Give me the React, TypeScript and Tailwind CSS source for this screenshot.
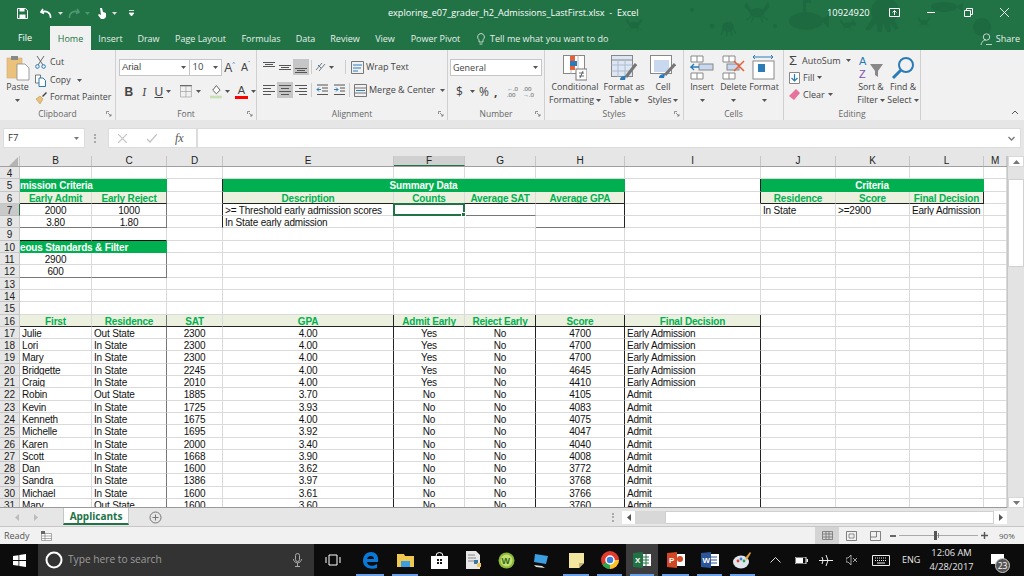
import React from 'react';

type C = [number, number, string, string];
const L = 'text-left pl-[2px]';
const CC = 'text-center';
const HD = 'bg-[#ebf1de] text-[#00b050] font-bold text-center border-b-[#222]';
const GH = 'bg-[#00b050] text-white font-bold text-center border-b-[#00b050] border-r-[#00b050]';
const EA = 'Early Admission';
const data: [string, string, string, string, string, string, string, string][] = [
  ['Julie', 'Out State', '2300', '4.00', 'Yes', 'No', '4700', EA],
  ['Lori', 'In State', '2300', '4.00', 'Yes', 'No', '4700', EA],
  ['Mary', 'In State', '2300', '4.00', 'Yes', 'No', '4700', EA],
  ['Bridgette', 'In State', '2245', '4.00', 'Yes', 'No', '4645', EA],
  ['Craig', 'In State', '2010', '4.00', 'Yes', 'No', '4410', EA],
  ['Robin', 'Out State', '1885', '3.70', 'No', 'No', '4105', 'Admit'],
  ['Kevin', 'In State', '1725', '3.93', 'No', 'No', '4083', 'Admit'],
  ['Kenneth', 'In State', '1675', '4.00', 'No', 'No', '4075', 'Admit'],
  ['Michelle', 'In State', '1695', '3.92', 'No', 'No', '4047', 'Admit'],
  ['Karen', 'In State', '2000', '3.40', 'No', 'No', '4040', 'Admit'],
  ['Scott', 'In State', '1668', '3.90', 'No', 'No', '4008', 'Admit'],
  ['Dan', 'In State', '1600', '3.62', 'No', 'No', '3772', 'Admit'],
  ['Sandra', 'In State', '1386', '3.97', 'No', 'No', '3768', 'Admit'],
  ['Michael', 'In State', '1600', '3.61', 'No', 'No', '3766', 'Admit'],
  ['Mary', 'Out State', '1600', '3.60', 'No', 'No', '3760', 'Admit'],
];
const K = 'border-r-[#222]';
const GR = 'border-r-[#777]';
const BG = 'border-b-[#777]';
// column index: B0 C1 D2 E3 F4 G5 H6 I7 J8 K9 L10 M11
const rows: Record<number, C[]> = {
  5: [[0, 2, 'mission Criteria', GH + ' !text-left'], [2, 1, '', K], [3, 4, 'Summary Data', GH], [7, 1, '', K], [8, 3, 'Criteria', GH]],
  6: [[0, 1, 'Early Admit', HD], [1, 1, 'Early Reject', HD + ' ' + GR], [2, 1, '', K],
    [3, 1, 'Description', HD], [4, 1, 'Counts', HD], [5, 1, 'Average SAT', HD], [6, 1, 'Average GPA', HD + ' ' + K], [7, 1, '', K],
    [8, 1, 'Residence', HD], [9, 1, 'Score', HD], [10, 1, 'Final Decision', HD + ' ' + K]],
  7: [[0, 1, '2000', CC], [1, 1, '1000', CC + ' ' + GR], [2, 1, '', K], [3, 1, '>= Threshold early admission scores', L], [4, 1, '', 'SEL'], [5, 1, '', BG], [6, 1, '', K], [8, 1, 'In State', L], [9, 1, '>=2900', L], [10, 1, EA, L]],
  8: [[0, 1, '3.80', CC + ' ' + BG], [1, 1, '1.80', CC + ' ' + BG + ' ' + GR], [2, 1, '', K], [3, 1, 'In State early admission', L], [6, 1, '', K + ' ' + BG]],
  9: [[0, 1, '', 'border-b-[#111]'], [1, 1, '', 'border-b-[#111]']],
  10: [[0, 2, 'eous Standards & Filter', GH + ' !text-left']],
  11: [[0, 1, '2900', CC], [1, 1, '', GR]],
  12: [[0, 1, '600', CC + ' ' + BG], [1, 1, '', GR + ' ' + BG]],
  16: [[0, 1, 'First', HD], [1, 1, 'Residence', HD + ' ' + GR], [2, 1, 'SAT', HD], [3, 1, 'GPA', HD + ' ' + K], [4, 1, 'Admit Early', HD], [5, 1, 'Reject Early', HD + ' ' + K], [6, 1, 'Score', HD + ' ' + K], [7, 1, 'Final Decision', HD + ' ' + K]],
};
data.forEach((d, i) => {
  rows[17 + i] = [[0, 1, d[0], L], [1, 1, d[1], L + ' ' + GR], [2, 1, d[2], CC], [3, 1, d[3], CC + ' ' + K], [4, 1, d[4], CC], [5, 1, d[5], CC + ' ' + K], [6, 1, d[6], CC + ' ' + K], [7, 1, d[7], L + ' ' + K]];
});

const GRID = 'grid grid-cols-[20px_72px_75px_56px_171px_71px_71px_89px_136px_75px_74px_74px_23px]';
const colsL = ['B', 'C', 'D', 'E', 'F', 'G', 'H', 'I', 'J', 'K', 'L', 'M'];

function Row({ n }: { n: number }) {
  const defs = rows[n] ?? [];
  const out: React.ReactNode[] = [];
  let col = 0;
  while (col < 12) {
    const d = defs.find((x) => x[0] === col);
    const span = d ? d[1] : 1;
    const cls = d ? d[3] : '';
    const sel = cls === 'SEL';
    out.push(
      <div
        key={col}
        className={
          'relative h-full border-r border-b border-[#dadada] leading-[13.5px] whitespace-nowrap overflow-hidden ' +
          (span === 2 ? 'col-span-2 ' : span === 3 ? 'col-span-3 ' : span === 4 ? 'col-span-4 ' : '') +
          (sel ? 'overflow-visible' : cls)
        }
      >
        {d ? d[2] : ''}
        {sel && (
          <div className="absolute -left-px -top-px w-[72px] h-[13px] border-2 border-[#217346] z-10">
            <div className="absolute -right-[3px] -bottom-[3px] w-[5px] h-[5px] bg-[#217346] border border-white" />
          </div>
        )}
      </div>
    );
    col += span;
  }
  return (
    <div className={GRID + ' h-[12.3px]'}>
      <div className={'h-full border-r border-b text-center leading-[13.5px] text-[10px] overflow-hidden ' + (n === 7 ? 'bg-[#c9c9c9] border-b-[#bbb] border-r-[#217346] text-[#222]' : 'bg-[#e6e6e6] border-[#c6c6c6] text-[#222]')}>
        {n}
      </div>
      {out}
    </div>
  );
}

const ui = "font-['Open_Sans','Noto_Sans',sans-serif]";

function Caret({ c = '#555' }: { c?: string }) {
  return <svg width="5" height="3" viewBox="0 0 5 3" className="shrink-0"><path d="M0 0h5L2.5 3z" fill={c} /></svg>;
}
function Lines({ ys, xs }: { ys: number[]; xs: [number, number][] }) {
  return (
    <svg width="14" height="14" viewBox="0 0 14 14">
      {ys.map((y, i) => (
        <rect key={i} x={xs[i][0]} y={y} width={xs[i][1]} height="1" fill="#555" />
      ))}
    </svg>
  );
}

function Group({ w, label, launcher, children }: { w: string; label: string; launcher?: boolean; children: React.ReactNode }) {
  return (
    <div className={w + ' relative h-full border-r border-[#d0d0d0] flex flex-col shrink-0'}>
      <div className="flex-1 min-h-0">{children}</div>
      <div className="h-[13px] text-center text-[8.5px] leading-[13px] text-[#666]">{label}</div>
      {launcher && (
        <svg className="absolute right-[3px] bottom-[3px]" width="6" height="6" viewBox="0 0 6 6"><path d="M.5 3V.5H3M2 2l3 3M5 3v2H3" stroke="#777" fill="none" strokeWidth=".8" /></svg>
      )}
    </div>
  );
}

function BigBtn({ w, a, b, caret = true, children }: { w: string; a: string; b?: string; caret?: boolean; children: React.ReactNode }) {
  return (
    <div className={w + ' flex flex-col items-center shrink-0'}>
      <div className="h-[27px] mt-[4px] flex items-center justify-center">{children}</div>
      <div className="text-[8.8px] leading-[13px] text-[#444] whitespace-nowrap">{a}</div>
      <div className="text-[8.8px] leading-[13px] text-[#444] whitespace-nowrap flex items-center gap-[2px] h-[13px]">
        {b}
        {caret && <Caret />}
      </div>
    </div>
  );
}

function Ribbon() {
  return (
    <div className={'h-[70px] bg-[#f1f1f1] flex shrink-0 ' + ui}>
      <Group w="w-[116px]" label="Clipboard" launcher>
        <div className="flex">
          <div className="w-[35px] flex flex-col items-center shrink-0">
            <svg width="24" height="26" viewBox="0 0 24 26" className="mt-[5px]">
              <rect x="1" y="3" width="15" height="20" fill="#eac27c" stroke="#c9a468" strokeWidth=".5" />
              <rect x="5" y="1" width="7" height="4" fill="#888" />
              <path d="M11 9h8l4 4v12H11z" fill="#fff" stroke="#888" strokeWidth=".8" />
            </svg>
            <div className="text-[8.8px] leading-[13px] text-[#444]">Paste</div>
            <div className="mt-[5px]"><Caret /></div>
          </div>
          <div className="flex flex-col pt-[4px] gap-0 text-[8.8px] text-[#444] leading-[17px] whitespace-nowrap">
            <div className="flex items-center gap-[4px] h-[17px]">
              <svg width="11" height="13" viewBox="0 0 11 13"><path d="M2 0l6 9M9 0L3 9" stroke="#666" fill="none" /><circle cx="2.4" cy="10.5" r="1.8" fill="none" stroke="#2a7bb8" /><circle cx="8.6" cy="10.5" r="1.8" fill="none" stroke="#2a7bb8" /></svg>
              Cut
            </div>
            <div className="flex items-center gap-[4px] h-[18px]">
              <svg width="11" height="13" viewBox="0 0 11 13"><path d="M.5 1h5v8h-5z" fill="#fff" stroke="#777" /><path d="M4 4h4l2.5 2.5V12.5H4z" fill="#fff" stroke="#2a7bb8" /></svg>
              Copy
              <span className="ml-[2px]"><Caret /></span>
            </div>
            <div className="flex items-center gap-[3px] h-[17px]">
              <svg width="12" height="12" viewBox="0 0 12 12"><path d="M7 4l4-4 1 1-4 4z" fill="#444" /><path d="M1 7l4-3 3 3-3 5z" fill="#eac27c" stroke="#b08a40" strokeWidth=".5" /></svg>
              Format Painter
            </div>
          </div>
        </div>
      </Group>
      <Group w="w-[141px]" label="Font" launcher>
        <div className="flex flex-col pl-[3px] pt-[9px]">
          <div className="flex items-center h-[17px]">
            <div className="w-[72px] h-[17px] bg-white border border-[#c6c6c6] flex items-center justify-between px-[2px] pr-[3px] text-[9.5px] text-[#444]"><span className="font-['Liberation_Sans']">Arial</span><Caret /></div>
            <div className="w-[32px] h-[17px] bg-white border border-l-0 border-[#c6c6c6] flex items-center justify-between px-[2px] pr-[3px] text-[9.5px] text-[#444]">10<Caret /></div>
            <div className="ml-[2px] w-[17px] text-[12px] text-[#444] leading-none font-['Liberation_Sans'] relative">A<span className="absolute left-[8px] -top-[1px] text-[6px] text-[#2a7bb8]">^</span></div>
            <div className="w-[15px] text-[10.5px] text-[#444] leading-none font-['Liberation_Sans'] relative">A<span className="absolute left-[7px] -top-[2px] text-[6px] text-[#2a7bb8]">ˇ</span></div>
          </div>
          <div className="flex items-center h-[17px] mt-[7px] text-[#444] font-['Liberation_Sans']">
            <div className="ml-[2px] w-[17px] font-bold text-[12px] text-center">B</div>
            <div className="w-[17px] italic font-serif text-[12px] text-center">I</div>
            <div className="w-[15px] underline text-[12px] text-center">U</div>
            <Caret />
            <div className="w-[10px]" />
            <svg width="13" height="13" viewBox="0 0 13 13"><path d="M.5.5h12v12H.5zM6.5.5v12M.5 6.5h12" stroke="#999" fill="none" strokeWidth=".7" /><path d="M0 0h13" stroke="#555" /></svg>
            <span className="ml-[4px]"><Caret /></span>
            <div className="w-[10px]" />
            <svg width="14" height="15" viewBox="0 0 14 15"><path d="M3 6l4-5 4 5-4 4z" fill="#fff" stroke="#555" /><rect x="0" y="12" width="13" height="3" fill="#c6e0b4" /></svg>
            <span className="ml-[3px]"><Caret /></span>
            <div className="w-[5px]" />
            <div className="w-[13px] flex flex-col items-center">
              <span className="text-[11px] leading-[12px]">A</span>
              <span className="w-[13px] h-[3px] bg-[#f00]" />
            </div>
            <span className="ml-[3px]"><Caret /></span>
          </div>
        </div>
      </Group>
      <Group w="w-[191px]" label="Alignment" launcher>
        <div className="flex flex-col pl-[4px] pt-[9px]">
          <div className="flex items-center h-[16px]">
            <div className="w-[16px] h-[16px] flex items-center justify-center"><Lines ys={[2, 4, 6]} xs={[[1, 12], [3, 8], [1, 12]]} /></div>
            <div className="w-[16px] h-[16px] flex items-center justify-center"><Lines ys={[5, 7, 9]} xs={[[1, 12], [3, 8], [1, 12]]} /></div>
            <div className="w-[16px] h-[16px] bg-[#c6c6c6] flex items-center justify-center"><Lines ys={[8, 10, 12]} xs={[[1, 12], [3, 8], [1, 12]]} /></div>
            <div className="w-px h-[14px] bg-[#ccc] ml-[2px]" />
            <div className="w-[25px] flex items-center justify-center gap-[2px]">
              <svg width="12" height="12" viewBox="0 0 12 12"><path d="M1 9l6-7M4 10l6-7" stroke="#777" fill="none" /><path d="M3 4l3 3" stroke="#2a7bb8" /></svg>
              <Caret />
            </div>
            <div className="w-px h-[14px] bg-[#ccc] ml-[8px]" />
            <svg className="ml-[5px]" width="13" height="13" viewBox="0 0 13 13"><path d="M.5.5h12v12H.5z" fill="none" stroke="#777" /><path d="M2 4h9M2 7h8M2 10h5" stroke="#2a7bb8" /></svg>
            <span className="ml-[2px] text-[9px] text-[#444] whitespace-nowrap">Wrap Text</span>
          </div>
          <div className="flex items-center h-[16px] mt-[7px]">
            <div className="w-[16px] h-[16px] flex items-center justify-center"><Lines ys={[2, 5, 8, 11]} xs={[[1, 12], [1, 8], [1, 12], [1, 8]]} /></div>
            <div className="w-[16px] h-[16px] bg-[#c6c6c6] flex items-center justify-center"><Lines ys={[2, 5, 8, 11]} xs={[[1, 12], [3, 8], [1, 12], [3, 8]]} /></div>
            <div className="w-[16px] h-[16px] flex items-center justify-center"><Lines ys={[2, 5, 8, 11]} xs={[[1, 12], [5, 8], [1, 12], [5, 8]]} /></div>
            <div className="w-px h-[14px] bg-[#ccc] ml-[2px]" />
            <svg className="ml-[4px]" width="13" height="12" viewBox="0 0 13 12"><path d="M1 1h11M6 4h6M6 7h6M1 10.5h11" stroke="#555" /><path d="M5 5.5H1l2-2M1 5.5l2 2" stroke="#2a7bb8" fill="none" /></svg>
            <svg className="ml-[4px]" width="13" height="12" viewBox="0 0 13 12"><path d="M1 1h11M7 4h5M7 7h5M1 10.5h11" stroke="#555" /><path d="M1 5.5h4l-2-2M5 5.5l-2 2" stroke="#2a7bb8" fill="none" /></svg>
            <div className="w-px h-[14px] bg-[#ccc] ml-[3px]" />
            <svg className="ml-[4px]" width="13" height="13" viewBox="0 0 13 13"><path d="M.5.5h12v12H.5zM.5 4h12M.5 9h12" fill="none" stroke="#777" /><path d="M2 6.5h9" stroke="#2a7bb8" /></svg>
            <span className="ml-[2px] text-[9px] text-[#444] whitespace-nowrap">Merge &amp; Center</span>
            <span className="ml-[5px]"><Caret /></span>
          </div>
        </div>
      </Group>
      <Group w="w-[97px]" label="Number" launcher>
        <div className="flex flex-col pl-[2px] pt-[9px]">
          <div className="w-[92px] h-[17px] bg-white border border-[#c6c6c6] flex items-center justify-between px-[2px] pr-[3px] text-[9px] text-[#444]">General<Caret /></div>
          <div className="flex items-center h-[17px] mt-[7px] text-[#444] pl-[6px]">
            <span className="text-[12px] w-[11px]">$</span>
            <span className="ml-[3px]"><Caret /></span>
            <span className="text-[12px] ml-[4px]">%</span>
            <span className="text-[12px] font-bold ml-[5px] w-[8px] leading-none">,</span>
            <span className="ml-[5px] text-[6px] leading-[6px] w-[13px]"><span className="text-[#2a7bb8]">←</span>.0<br />.00</span>
            <span className="ml-[3px] text-[6px] leading-[6px] w-[12px]">.00<br /><span className="text-[#2a7bb8]">→</span>.0</span>
          </div>
        </div>
      </Group>
      <Group w="w-[139px]" label="Styles" launcher>
        <div className="flex pl-[3px]">
          <BigBtn w="w-[54px]" a="Conditional" b="Formatting">
            <svg width="24" height="26" viewBox="0 0 24 26"><rect x=".5" y=".5" width="21" height="18" fill="#fff" stroke="#888" /><path d="M8 .5v18M15 .5v18" stroke="#bbb" /><rect x="7" y="1" width="5" height="5" fill="#e5613a" /><rect x="7" y="6" width="7" height="5" fill="#2a7bb8" /><rect x="7" y="11" width="5" height="4" fill="#e5613a" /><rect x="13" y="14" width="11" height="11" fill="#fff" stroke="#777" /><path d="M16 18h5M16 21h5M20 16l-3 7" stroke="#444" fill="none" strokeWidth=".8" /></svg>
          </BigBtn>
          <BigBtn w="w-[44px]" a="Format as" b="Table">
            <svg width="26" height="26" viewBox="0 0 26 26"><rect x=".5" y=".5" width="21" height="21" fill="#dce6f4" stroke="#888" /><path d="M.5 5h21" stroke="#888" /><path d="M7 5v17M14 5v17M.5 10h21M.5 16h21" stroke="#b0bccc" /><path d="M25 9L15 22" stroke="#777" strokeWidth="3" /><path d="M9 25c0-3 2-4 6-4l-1 4z" fill="#2a7bb8" /></svg>
          </BigBtn>
          <BigBtn w="w-[34px]" a="Cell" b="Styles">
            <svg width="26" height="26" viewBox="0 0 26 26"><rect x=".5" y=".5" width="21" height="18" fill="#fff" stroke="#888" /><rect x="4" y="5" width="15" height="12" fill="#c8d9ef" /><path d="M25 9L15 20" stroke="#777" strokeWidth="3" /><path d="M9 23c0-3 2-4 6-4l-1 4z" fill="#2a7bb8" /></svg>
          </BigBtn>
        </div>
      </Group>
      <Group w="w-[100px]" label="Cells">
        <div className="flex pl-[2px]">
          <BigBtn w="w-[32px]" a="Insert" b="">
            <svg width="24" height="26" viewBox="0 0 24 26"><path d="M1 1h12v6H1zM7 1v6M1 18h12v6H1zM7 18v6" fill="#fff" stroke="#888" /><rect x="9" y="9" width="14" height="6" fill="#c8d9ef" stroke="#888" /><path d="M9 12H1l3-3M1 12l3 3" stroke="#2a7bb8" strokeWidth="1.3" fill="none" /></svg>
          </BigBtn>
          <BigBtn w="w-[31px]" a="Delete" b="">
            <svg width="24" height="26" viewBox="0 0 24 26"><path d="M1 1h12v6H1zM7 1v6M1 18h12v6H1zM7 18v6" fill="#fff" stroke="#888" /><rect x="5" y="9" width="12" height="6" fill="#c8d9ef" stroke="#888" /><path d="M12 6l10 10M22 6L12 16" stroke="#e5613a" strokeWidth="1.5" /></svg>
          </BigBtn>
          <BigBtn w="w-[30px]" a="Format" b="">
            <svg width="24" height="26" viewBox="0 0 24 26"><path d="M1 2h20M1 2l2-2M1 2l2 2M21 2l-2-2M21 2l-2 2" stroke="#2a7bb8" fill="none" /><rect x="1" y="6" width="21" height="18" fill="#fff" stroke="#888" /><rect x="6" y="9" width="7" height="8" fill="#2a7bb8" /></svg>
          </BigBtn>
        </div>
      </Group>
      <Group w="w-[137px]" label="Editing">
        <div className="flex pl-[5px]">
          <div className="w-[67px] flex flex-col text-[9px] text-[#444] pt-[2px] shrink-0">
            <div className="flex items-center h-[17px] gap-[3px]"><span className="text-[13px] leading-none w-[10px] font-['Liberation_Sans']">Σ</span>AutoSum<span className="ml-[2px]"><Caret /></span></div>
            <div className="flex items-center h-[17px] gap-[3px]"><svg width="11" height="12" viewBox="0 0 11 12"><path d="M.5.5h10v11H.5z" fill="#fff" stroke="#888" /><path d="M5.5 2v7M2.5 6l3 3 3-3" stroke="#2a7bb8" fill="none" strokeWidth="1.2" /></svg>Fill<Caret /></div>
            <div className="flex items-center h-[17px] gap-[3px]"><svg width="11" height="11" viewBox="0 0 11 11"><path d="M7 0l4 4-6 7-5-4z" fill="#e8739a" /></svg>Clear<Caret /></div>
          </div>
          <BigBtn w="w-[30px]" a="Sort &" b="Filter">
            <svg width="28" height="26" viewBox="0 0 28 26"><text x="2" y="10" fontSize="11" fill="#2a7bb8" fontFamily="Liberation Sans">A</text><text x="2" y="23" fontSize="11" fill="#7d4fb3" fontFamily="Liberation Sans">Z</text><path d="M13 9h13l-5 7v6l-3-2v-4z" fill="#888" /></svg>
          </BigBtn>
          <div className="w-[2px]" />
          <BigBtn w="w-[30px]" a="Find &" b="Select">
            <svg width="24" height="24" viewBox="0 0 24 24"><circle cx="15" cy="9" r="7" fill="none" stroke="#2a7bb8" strokeWidth="2" /><path d="M10 14l-8 8" stroke="#2a7bb8" strokeWidth="3" /></svg>
          </BigBtn>
        </div>
      </Group>
      <div className="flex-1 relative">
        <svg className="absolute right-[5px] bottom-[5px]" width="8" height="5" viewBox="0 0 8 5"><path d="M1 4l3-3 3 3" stroke="#555" fill="none" /></svg>
      </div>
    </div>
  );
}

const tabs: [string, string][] = [
  ['Insert', 'w-[39px]'], ['Draw', 'w-[37px]'], ['Page Layout', 'w-[67px]'], ['Formulas', 'w-[54px]'], ['Data', 'w-[35px]'], ['Review', 'w-[44px]'], ['View', 'w-[36px]'], ['Power Pivot', 'w-[65px]'],
];

function Crab({ x, y, s = 1 }: { x: number; y: number; s?: number }) {
  return (
    <g transform={`translate(${x} ${y}) scale(${s})`}>
      <ellipse cx="10" cy="9" rx="6" ry="4" />
      <path d="M4 8L0 4l1-3 2 3 2 3zM16 8l4-4-1-3-2 3-2 3zM5 12l-4 3M15 12l4 3M7 13l-2 4M13 13l2 4" stroke="#1d6a40" strokeWidth="1" />
    </g>
  );
}

function Decor() {
  return (
    <svg className="absolute left-[620px] top-0 pointer-events-none" width="404" height="50" viewBox="0 0 404 50" fill="#1d6a40">
      <Crab x={6} y={18} s={0.8} />
      <circle cx="92" cy="26" r="2.5" /><circle cx="72" cy="10" r="2" />
      <ellipse cx="108" cy="27" rx="6" ry="5" /><path d="M103 30l-2 5M107 31v5M111 31l1 5M114 30l2 4" stroke="#1d6a40" strokeWidth="1.4" />
      <Crab x={125} y={2} s={1.2} />
      <circle cx="155" cy="26" r="2" />
      <ellipse cx="186" cy="21" rx="17" ry="9" /><path d="M200 20l9-6v14z" /><rect x="183" y="0" width="3" height="12" /><rect x="183" y="0" width="8" height="3" />
      <circle cx="222" cy="12" r="2" /><circle cx="234" cy="24" r="2" />
      <Crab x={220} y={19} s={0.7} />
      <ellipse cx="265" cy="11" rx="14" ry="13" /><path d="M253 17l-8 13h5l6-7 2 9h4l1-9 4 9h4l-1-9 5 7 4-2-7-11z" />
      <Crab x={298} y={17} s={0.6} />
      <ellipse cx="324" cy="7" rx="13" ry="5" /><path d="M336 7l7-4v8z" /><circle cx="362" cy="27" r="9" />
    </svg>
  );
}

function TitleBar() {
  return (
    <div className={'relative h-[26px] shrink-0 flex items-center text-white ' + ui}>
      <svg className="ml-[17px]" width="11" height="11" viewBox="0 0 11 11"><path d="M.5.5h8l2 2v8H.5z" fill="none" stroke="#fff" /><rect x="2.5" y="6.5" width="6" height="4" fill="#fff" /><rect x="2.5" y=".5" width="5" height="3" fill="#fff" /></svg>
      <svg className="ml-[12px]" width="12" height="11" viewBox="0 0 12 11"><path d="M3 1L1 4l3 1.5M1.5 4C6 2.5 11 4 10.5 10" stroke="#fff" strokeWidth="1.6" fill="none" /></svg>
      <span className="ml-[6px]"><Caret c="#ddd" /></span>
      <svg className="ml-[5px]" width="12" height="11" viewBox="0 0 12 11"><path d="M9 1l2 3-3 1.5M10.5 4C6 2.5 1 4 1.5 10" stroke="#4f9672" strokeWidth="1.6" fill="none" /></svg>
      <span className="ml-[5px]"><Caret c="#4f9672" /></span>
      <svg className="ml-[7px]" width="10" height="12" viewBox="0 0 10 12"><path d="M3 1h2l1 4 3 1v4l-2 2H4L1 8l1-1 2 1z" fill="#fff" /></svg>
      <span className="ml-[5px]"><Caret c="#ddd" /></span>
      <svg className="ml-[12px]" width="5" height="6" viewBox="0 0 5 6"><path d="M0 .5h5M0 3h5L2.5 6 0 3" stroke="#fff" strokeWidth=".8" fill="#fff" /></svg>
      <span className="absolute left-[388px] top-[6px] text-[9.1px] leading-[13px] whitespace-nowrap">exploring_e07_grader_h2_Admissions_LastFirst.xlsx&nbsp; -&nbsp; Excel</span>
      <span className="absolute left-[827px] top-[6px] text-[9.3px] leading-[13px]">10924920</span>
      <svg className="absolute left-[889px] top-[8px]" width="11" height="9" viewBox="0 0 11 9"><path d="M.5.5h10v8H.5z" fill="none" stroke="#fff" /><path d="M5.5 7V3M3.5 4.5l2-2 2 2" stroke="#fff" fill="none" /></svg>
      <div className="absolute left-[927px] top-[12px] w-[8px] h-px bg-white" />
      <svg className="absolute left-[964px] top-[8px]" width="9" height="9" viewBox="0 0 9 9"><path d="M.5 2.5h6v6h-6zM2.5 2.5v-2h6v6h-2" fill="none" stroke="#fff" /></svg>
      <svg className="absolute left-[1000px] top-[8px]" width="9" height="9" viewBox="0 0 9 9"><path d="M0 0l9 9M9 0L0 9" stroke="#fff" strokeWidth=".9" /></svg>
    </div>
  );
}

function TabBar() {
  return (
    <div className={'relative h-[24px] shrink-0 flex items-end text-[9px] text-[#e6f0ea] ' + ui}>
      <div className="w-[50px] h-[24px] text-center leading-[24px] text-white">File</div>
      <div className="w-[41px] h-[24px] bg-[#f1f1f1] text-[#217346] text-center leading-[26px]">Home</div>
      {tabs.map(([t, w]) => (
        <div key={t} className={w + ' h-[24px] text-center leading-[26px] whitespace-nowrap'}>{t}</div>
      ))}
      <div className="ml-[9px] h-[24px] flex items-center gap-[5px] whitespace-nowrap pt-[2px]">
        <svg width="8" height="12" viewBox="0 0 8 12"><path d="M4 .5a3.5 3.5 0 0 1 2 6.3V9H2V6.8A3.5 3.5 0 0 1 4 .5zM2.5 11h3" stroke="#fff" fill="none" strokeWidth=".7" /></svg>
        Tell me what you want to do
      </div>
      <div className="flex-1" />
      <div className="h-[24px] flex items-center gap-[4px] pr-[4px] pt-[2px]">
        <svg width="12" height="12" viewBox="0 0 12 12"><circle cx="6.5" cy="4" r="3.2" fill="none" stroke="#fff" strokeWidth=".7" /><path d="M1 12c1-4 3-5 5-5M6 11.5h6" stroke="#fff" fill="none" strokeWidth=".7" /></svg>
        Share
      </div>
    </div>
  );
}

function FormulaBar() {
  return (
    <div className={'h-[36px] bg-[#e6e6e6] shrink-0 flex items-start pt-[9px] ' + ui}>
      <div className="ml-[4px] w-[80px] h-[18px] bg-white flex items-center justify-between pl-[4px] pr-[5px] text-[9.5px] text-[#333] shadow-[0_0_0_1px_#dcdcdc]">F7<Caret c="#777" /></div>
      <div className="ml-[10px] w-[3px] h-[9px] mt-[5px] border-l-2 border-dotted border-[#aaa]" />
      <div className="ml-[12px] w-[87px] h-[18px] bg-white flex items-center text-[#bbb] shadow-[0_0_0_1px_#dcdcdc]">
        <svg className="ml-[9px]" width="9" height="9" viewBox="0 0 9 9"><path d="M0 0l9 9M9 0L0 9" stroke="#c4c4c4" strokeWidth="1.2" /></svg>
        <svg className="ml-[20px]" width="10" height="9" viewBox="0 0 10 9"><path d="M0 5l3 3 7-8" stroke="#c4c4c4" strokeWidth="1.4" fill="none" /></svg>
        <span className="ml-[18px] font-['Liberation_Serif'] italic text-[12px] text-[#555]">fx</span>
      </div>
      <div className="ml-[2px] w-[822px] h-[18px] bg-white flex items-center justify-end pr-[5px] shadow-[0_0_0_1px_#dcdcdc]">
        <svg width="7" height="5" viewBox="0 0 7 5"><path d="M.5 1l3 3 3-3" stroke="#777" strokeWidth="1.3" fill="none" /></svg>
      </div>
    </div>
  );
}

function Sheet() {
  const ns: number[] = [];
  for (let i = 4; i <= 31; i++) ns.push(i);
  return (
    <div className="flex h-[352px] shrink-0 bg-white font-['Liberation_Sans',Arial,sans-serif] text-[10px] tracking-[-0.18px] text-[#111]">
      <div className="w-[1007px] flex flex-col overflow-hidden border-b border-[#9a9a9a]">
        <div className={GRID + ' h-[11px] shrink-0 bg-[#e6e6e6] text-[10px] leading-[10px] text-center text-[#222] border-b border-[#a0a0a0]'}>
          <div className="relative border-r border-[#c6c6c6]">
            <svg className="absolute right-[1px] bottom-0" width="9" height="9" viewBox="0 0 9 9"><path d="M9 0v9H0z" fill="#b4b4b4" /></svg>
          </div>
          {colsL.map((c) => (
            <div key={c} className={'border-r border-[#c6c6c6] h-[10px] overflow-hidden ' + (c === 'F' ? 'bg-[#d0d0d0] !border-b !border-b-[#217346]' : '')}>{c}</div>
          ))}
        </div>
        <div className="flex-1 overflow-hidden">
          {ns.map((n) => <Row key={n} n={n} />)}
        </div>
      </div>
      <div className="w-[17px] bg-[#e3e3e3] flex flex-col border-l border-[#c6c6c6]">
        <div className="h-[11px] bg-white flex items-center justify-center border border-[#d8d8d8]"><svg width="7" height="4" viewBox="0 0 7 4"><path d="M0 4h7L3.5 0z" fill="#777" /></svg></div>
        <div className="h-[88px] mt-[12px] bg-white border border-[#d0d0d0]" />
        <div className="flex-1" />
        <div className="h-[11px] bg-white flex items-center justify-center border border-[#d8d8d8]"><svg width="7" height="4" viewBox="0 0 7 4"><path d="M0 0h7L3.5 4z" fill="#777" /></svg></div>
      </div>
    </div>
  );
}

function SheetTabs() {
  return (
    <div className={'h-[19px] bg-[#e6e6e6] shrink-0 flex items-start border-b border-[#c6c6c6] ' + ui}>
      <svg className="ml-[15px] mt-[6px]" width="4" height="7" viewBox="0 0 4 7"><path d="M4 0v7L0 3.5z" fill="#bbb" /></svg>
      <svg className="ml-[15px] mt-[6px]" width="4" height="7" viewBox="0 0 4 7"><path d="M0 0v7l4-3.5z" fill="#bbb" /></svg>
      <div className="ml-[25px] w-[66px] h-[17px] bg-white border-b-2 border-[#217346] border-x border-x-[#c6c6c6] text-center text-[10px] font-bold text-[#217346] leading-[16px]">Applicants</div>
      <svg className="ml-[20px] mt-[3px]" width="13" height="13" viewBox="0 0 13 13"><circle cx="6.5" cy="6.5" r="5.5" fill="none" stroke="#777" /><path d="M6.5 3.5v6M3.5 6.5h6" stroke="#777" /></svg>
      <div className="ml-[450px] mt-[5px] w-[3px] h-[9px] border-l-2 border-dotted border-[#aaa]" />
      <div className="ml-[7px] w-[13px] h-[13px] mt-[3px] bg-white flex items-center justify-center"><svg width="4" height="7" viewBox="0 0 4 7"><path d="M4 0v7L0 3.5z" fill="#555" /></svg></div>
      <div className="w-[30px] h-[13px] mt-[3px] bg-[#d8d8d8]" />
      <div className="w-[329px] h-[13px] mt-[3px] bg-white border border-[#d0d0d0]" />
      <div className="w-[13px] h-[13px] mt-[3px] bg-white flex items-center justify-center"><svg width="4" height="7" viewBox="0 0 4 7"><path d="M0 0v7l4-3.5z" fill="#555" /></svg></div>
    </div>
  );
}

function StatusBar() {
  return (
    <div className={'h-[17px] bg-[#f1f1f1] shrink-0 flex items-center text-[9px] text-[#555] ' + ui}>
      <span className="ml-[4px]">Ready</span>
      <svg className="ml-[11px]" width="11" height="10" viewBox="0 0 11 10"><path d="M.5 2.5h10v7H.5zM.5 5h10M.5 7.5h10M4 2.5v7" fill="#fff" stroke="#888" strokeWidth=".7" /><rect x="0" y="0" width="4" height="3" fill="#666" /></svg>
      <div className="flex-1" />
      <div className="w-[24px] h-[17px] bg-[#d4d4d4] flex items-center justify-center">
        <svg width="11" height="9" viewBox="0 0 11 9"><path d="M.5.5h10v8H.5zM.5 3h10M.5 6h10M4 .5v8M7 .5v8" fill="none" stroke="#666" strokeWidth=".7" /></svg>
      </div>
      <div className="w-[24px] flex justify-center"><svg width="11" height="10" viewBox="0 0 11 10"><path d="M.5.5h10v9H.5z" fill="none" stroke="#666" strokeWidth=".8" /><path d="M3 3h5v4H3z" fill="none" stroke="#666" strokeWidth=".7" /></svg></div>
      <div className="w-[24px] flex justify-center"><svg width="11" height="10" viewBox="0 0 11 10"><path d="M.5.5h10v9H.5zM.5 6h6V.5" fill="none" stroke="#666" strokeWidth=".8" /></svg></div>
      <div className="w-[6px] h-[2px] bg-[#666] ml-[3px]" />
      <div className="relative w-[79px] h-px bg-[#aaa] ml-[3px]">
        <div className="absolute left-[35px] -top-[4px] w-[3px] h-[9px] bg-[#555]" />
        <div className="absolute left-[39px] -top-[2px] w-px h-[5px] bg-[#888]" />
      </div>
      <svg className="ml-[3px]" width="7" height="7" viewBox="0 0 7 7"><path d="M3.5 0v7M0 3.5h7" stroke="#555" strokeWidth="1.4" /></svg>
      <span className="ml-[11px] mr-[8px] w-[17px] text-[8px]">90%</span>
    </div>
  );
}

function App2({ active, w = 'w-[34px]', children }: { active?: boolean; w?: string; children: React.ReactNode }) {
  return <div className={w + ' h-full flex items-center justify-center relative shrink-0 ' + (active ? 'bg-[#3d3d3d]' : '')}>{children}</div>;
}

function Bar() {
  return <div className="absolute bottom-0 left-[4px] right-[4px] h-[2px] bg-[#6aa0e8]" />;
}

function Taskbar() {
  return (
    <div className={'h-[32px] bg-[#0c0c0c] shrink-0 flex items-center text-white ' + ui}>
      <div className="w-[38px] h-full flex items-center justify-center shrink-0">
        <svg width="13" height="13" viewBox="0 0 13 13" fill="#fff"><path d="M0 2l5.5-.8V6H0zM6.3 1.1L13 0v6H6.3zM0 7h5.5v4.8L0 11zM6.3 7H13v6l-6.7-1z" /></svg>
      </div>
      <div className="w-[276px] h-full bg-[#333] flex items-center shrink-0">
        <svg className="ml-[7px]" width="18" height="18" viewBox="0 0 18 18"><circle cx="9" cy="9" r="7.5" fill="none" stroke="#fff" strokeWidth="2" /></svg>
        <span className="ml-[5px] text-[10.2px] text-[#9c9c9c] whitespace-nowrap">Type here to search</span>
        <div className="flex-1" />
        <svg className="mr-[12px]" width="9" height="14" viewBox="0 0 9 14"><rect x="2.5" y="0.5" width="4" height="8" rx="2" fill="none" stroke="#aaa" /><path d="M.5 6c0 5 8 5 8 0M4.5 10v3M2 13.5h5" stroke="#aaa" fill="none" /></svg>
      </div>
      <App2 w="w-[38px]"><svg width="16" height="12" viewBox="0 0 16 12"><path d="M4 1h8v10H4z" fill="none" stroke="#fff" /><path d="M1 3v6M15 3v6" stroke="#fff" /></svg></App2>
      <App2 w="w-[36px]"><Bar /><svg width="17" height="17" viewBox="0 0 17 17"><path d="M1 9C1 3 5 0 9 0c5 0 8 4 7 10H5c0 4 6 5 10 2v4c-6 2-14 0-14-7z M5 7h7c0-4-6-4-7 0z" fill="#0a78d7" fillRule="evenodd" /></svg></App2>
      <App2><Bar /><svg width="17" height="14" viewBox="0 0 17 14"><path d="M0 1h7l1 2h9v11H0z" fill="#f0c850" /><rect x="4" y="8" width="9" height="6" fill="#3a9ee0" /></svg></App2>
      <App2><svg width="17" height="17" viewBox="0 0 17 17"><path d="M5 4a3.5 3.5 0 0 1 7 0" fill="none" stroke="#fff" /><path d="M0 4h17v13H0z" fill="#fff" /><path d="M6 7h2v2H6zM9 7h2v2H9zM6 10h2v2H6zM9 10h2v2H9z" fill="#111" /></svg></App2>
      <App2><svg width="17" height="18" viewBox="0 0 17 18"><path d="M1 0h10l4 4v14H1z" fill="#e8e8e8" /><path d="M3 4h7M3 7h8M3 10h6" stroke="#888" /><rect x="9" y="9" width="4" height="4" fill="#3b78a8" /><rect x="12" y="12" width="4" height="4" fill="#f0c850" /></svg></App2>
      <App2 w="w-[33px]"><svg width="17" height="17" viewBox="0 0 17 17"><circle cx="8.5" cy="8.5" r="8" fill="#8ab83a" /><circle cx="8.5" cy="8.5" r="6" fill="#c6de6c" /><text x="3.5" y="12" fontSize="9" fontWeight="bold" fill="#2e6a20" fontFamily="Liberation Sans">W</text></svg></App2>
      <App2 w="w-[36px]"><svg width="18" height="17" viewBox="0 0 18 17"><path d="M3 2l13 2-2 8-12-2z" fill="#3a9ee0" /><path d="M2 13l8 1 3 2-9-1z" fill="#ddd" /></svg></App2>
      <App2 w="w-[34px]"><Bar /><svg width="15" height="15" viewBox="0 0 15 15"><path d="M0 0h15v10l-5 5H0z" fill="#f3e7a0" /><path d="M10 15v-5h5z" fill="#bfb270" /></svg></App2>
      <App2 w="w-[33px]"><Bar /><svg width="18" height="18" viewBox="0 0 18 18"><circle cx="9" cy="9" r="9" fill="#e33b2e" /><path d="M9 9L1.2 13.5A9 9 0 0 0 9 18z" fill="#2da44e" /><path d="M9 9h9a9 9 0 0 1-9 9z" fill="#f7c52b" /><circle cx="9" cy="9" r="4" fill="#3a7fe0" stroke="#fff" strokeWidth="1.5" /></svg></App2>
      <App2 active w="w-[32px]"><Bar /><svg width="18" height="16" viewBox="0 0 18 16"><rect x="8" y="2" width="10" height="12" fill="#fff" /><path d="M10 5h6M10 8h6M10 11h6M13 2v12" stroke="#217346" /><path d="M0 1l10-1v16L0 15z" fill="#217346" /><text x="2" y="11" fontSize="8" fontWeight="bold" fill="#fff" fontFamily="Liberation Sans">X</text></svg></App2>
      <App2 w="w-[35px]"><Bar /><svg width="18" height="16" viewBox="0 0 18 16"><rect x="8" y="2" width="10" height="12" fill="#fff" /><circle cx="13" cy="7" r="3" fill="#d24726" /><path d="M0 1l10-1v16L0 15z" fill="#d24726" /><text x="2" y="11" fontSize="8" fontWeight="bold" fill="#fff" fontFamily="Liberation Sans">P</text></svg></App2>
      <App2 w="w-[33px]"><Bar /><svg width="18" height="16" viewBox="0 0 18 16"><rect x="8" y="2" width="10" height="12" fill="#fff" /><path d="M10 5h6M10 8h6M10 11h6" stroke="#2b579a" /><path d="M0 1l10-1v16L0 15z" fill="#2b579a" /><text x="1.5" y="11" fontSize="8" fontWeight="bold" fill="#fff" fontFamily="Liberation Sans">W</text></svg></App2>
      <App2 w="w-[33px]"><Bar /><svg width="19" height="18" viewBox="0 0 19 18"><ellipse cx="8" cy="11" rx="8" ry="6.5" fill="#dfe6ee" /><circle cx="5" cy="10" r="1.4" fill="#e33b2e" /><circle cx="8" cy="8" r="1.4" fill="#3a7fe0" /><circle cx="11" cy="10" r="1.4" fill="#2da44e" /><path d="M12 7l5-6 1 1-4 7z" fill="#d9a441" /></svg></App2>
      <App2 w="w-[33px]"><svg width="11" height="6" viewBox="0 0 11 6"><path d="M.5 5.5l5-5 5 5" stroke="#ddd" fill="none" /></svg></App2>
      <App2 w="w-[18px]"><svg width="13" height="7" viewBox="0 0 13 7"><rect x="0" y="0" width="11" height="7" fill="none" stroke="#eee" /><rect x="1" y="1" width="7" height="5" fill="#fff" /><rect x="11.5" y="2" width="1.5" height="3" fill="#eee" /></svg></App2>
      <App2 w="w-[32px]"><svg width="14" height="11" viewBox="0 0 14 11"><path d="M0 5.5h14M7 0l2 5.5-2 5.5M3 2l1 3.5-1 3.5" stroke="#eee" fill="none" /></svg></App2>
      <App2 w="w-[18px]"><svg width="11" height="10" viewBox="0 0 11 10"><path d="M0 3h2l3-3v10L2 7H0zM7 3l4 4M11 3L7 7" stroke="#ccc" fill="none" strokeWidth=".8" /></svg></App2>
      <App2 w="w-[42px]"><svg width="18" height="11" viewBox="0 0 18 11"><path d="M.5.5h17v10H.5z" fill="none" stroke="#eee" /><path d="M3 3h12M3 5.5h12" stroke="#eee" strokeDasharray="1 1" /><path d="M5 8h8" stroke="#eee" /></svg></App2>
      <span className="w-[23px] shrink-0 text-[9px] text-[#e6e6e6] whitespace-nowrap">ENG</span>
      <div className="w-[53px] shrink-0 text-center text-[9.3px] leading-[14px] text-[#e6e6e6] whitespace-nowrap flex flex-col items-center">
        <span>12:06 AM</span>
        <span>4/28/2017</span>
      </div>
      <div className="relative w-[46px] h-full shrink-0">
        <div className="absolute left-[13px] top-[10px] w-[13px] h-[10px] bg-white" />
        <div className="absolute left-[17px] top-[14px] w-[15px] h-[15px] rounded-full bg-[#555] border border-[#ccc] text-[8.5px] leading-[13px] text-center">23</div>
      </div>
    </div>
  );
}

export default function App() {
  return (
    <div className="w-[1024px] h-[576px] overflow-hidden flex flex-col">
      <div className="relative bg-[#217346] shrink-0">
        <Decor />
        <TitleBar />
        <TabBar />
      </div>
      <Ribbon />
      <FormulaBar />
      <Sheet />
      <SheetTabs />
      <StatusBar />
      <Taskbar />
    </div>
  );
}
